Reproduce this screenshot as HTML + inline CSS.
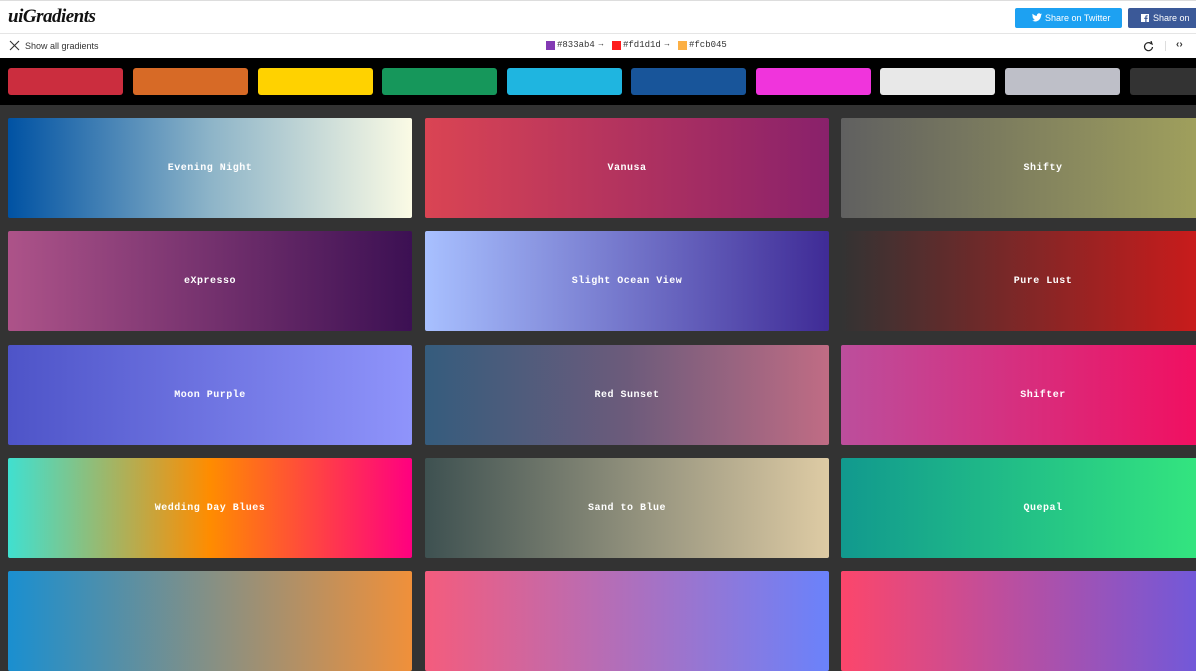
<!DOCTYPE html>
<html><head><meta charset="utf-8"><style>
*{margin:0;padding:0;box-sizing:border-box}
body{width:1196px;height:598px;overflow:hidden;background:#333;font-family:"Liberation Sans",sans-serif;position:relative}
.hdr{position:absolute;left:0;top:0;width:1196px;height:34px;background:#fff;border-top:1px solid #ddd;border-bottom:1px solid #e5e5e5}
.logo{position:absolute;left:8px;top:5px;font-family:"Liberation Serif",serif;font-style:italic;font-weight:bold;font-size:19px;color:#111;letter-spacing:-0.5px}
.btn{position:absolute;top:7px;height:20px;color:#fff;font-size:9px;line-height:20px;border-radius:2px;padding-left:30px}
.tb{position:absolute;left:0;top:34px;width:1196px;height:24px;background:#fff;font-size:9px;color:#333}
.band{position:absolute;left:0;top:58px;width:1196px;height:47px;background:#000}
.sw{position:absolute;top:10px;width:115px;height:27px;border-radius:3px}
.card{position:absolute;width:404px;height:100px;border-radius:2px;color:#fff;font-family:"Liberation Mono",monospace;font-size:10px;font-weight:bold;letter-spacing:0.5px;display:flex;align-items:center;justify-content:center}
.mono{font-family:"Liberation Mono",monospace}
</style></head><body>
<div class="hdr">
<div class="logo">uiGradients</div>
<div class="btn" style="left:1015px;width:107px;background:#1da1f2">
<svg style="position:absolute;left:17px;top:5px" width="10" height="9" viewBox="0 0 24 20"><path fill="#fff" d="M24 2.4a10 10 0 0 1-2.8.8A5 5 0 0 0 23.3.4a10 10 0 0 1-3.1 1.2A4.9 4.9 0 0 0 11.8 6 14 14 0 0 1 1.7.9a4.9 4.9 0 0 0 1.5 6.6A5 5 0 0 1 1 6.9a4.9 4.9 0 0 0 3.9 4.8 5 5 0 0 1-2.2.1 4.9 4.9 0 0 0 4.6 3.4A9.9 9.9 0 0 1 0 17.3 14 14 0 0 0 7.5 19.5c9 0 14-7.5 14-14v-.6A10 10 0 0 0 24 2.4z"/></svg>Share on Twitter</div>
<div class="btn" style="left:1128px;width:80px;background:#3b5998;padding-left:25px">
<svg style="position:absolute;left:13px;top:6px" width="8" height="8" viewBox="0 0 8 8"><rect width="8" height="8" fill="#fff"/><path d="M5.5 8V5h1l.2-1.2H5.5V3c0-.4.1-.6.6-.6h.6V1.3H5.8C4.8 1.3 4.3 1.9 4.3 2.8v1H3.3V5h1v3z" fill="#3b5998"/></svg>Share on Facebook</div>
</div>
<div class="tb">
<svg style="position:absolute;left:9px;top:6px" width="11" height="11" viewBox="0 0 11 11"><path d="M1 1L10 10M10 1L1 10" stroke="#333" stroke-width="1.1"/></svg>
<span style="position:absolute;left:25px;top:7px">Show all gradients</span>
<div style="position:absolute;left:546px;top:7px;width:9px;height:9px;background:#833ab4"></div>
<span class="mono" style="position:absolute;left:557px;top:6px">#833ab4</span><span style="position:absolute;left:597px;top:5px;font-size:8px">→</span>
<div style="position:absolute;left:612px;top:7px;width:9px;height:9px;background:#fd1d1d"></div>
<span class="mono" style="position:absolute;left:623px;top:6px">#fd1d1d</span><span style="position:absolute;left:663px;top:5px;font-size:8px">→</span>
<div style="position:absolute;left:678px;top:7px;width:9px;height:9px;background:#fcb045"></div>
<span class="mono" style="position:absolute;left:689px;top:6px">#fcb045</span>
<svg style="position:absolute;left:1143px;top:7px" width="11" height="11" viewBox="0 0 11 11"><path d="M8.5 3A4 4 0 1 0 9.5 6" fill="none" stroke="#222" stroke-width="1.2"/><path d="M6 1.5L9 3 8 0" fill="none" stroke="#222" stroke-width="1.2"/></svg>
<div style="position:absolute;left:1165px;top:7px;width:1px;height:10px;background:#ddd"></div>
<span style="position:absolute;left:1176px;top:5px;font-size:10px;font-weight:bold">‹›</span>
</div>
<div class="band">
<div class="sw" style="left:8px;background:#cb2d3e"></div>
<div class="sw" style="left:133px;background:#d76a26"></div>
<div class="sw" style="left:258px;background:#ffd200"></div>
<div class="sw" style="left:382px;background:#16975b"></div>
<div class="sw" style="left:507px;background:#1fb5e0"></div>
<div class="sw" style="left:631px;background:#18559a"></div>
<div class="sw" style="left:756px;background:#f034dc"></div>
<div class="sw" style="left:880px;background:#e8e8e8"></div>
<div class="sw" style="left:1005px;background:#bebfc8"></div>
<div class="sw" style="left:1130px;background:#333"></div>
</div>
<div class="card" style="left:8px;top:118px;background:linear-gradient(90deg,#0052a3,#8db4c8 50%,#fbfbe5)">Evening Night</div>
<div class="card" style="left:425px;top:118px;background:linear-gradient(90deg,#da4453,#89216b)">Vanusa</div>
<div class="card" style="left:841px;top:118px;background:linear-gradient(90deg,#606060,#a8a85c)">Shifty</div>
<div class="card" style="left:8px;top:231px;background:linear-gradient(90deg,#ad5389,#3c1053)">eXpresso</div>
<div class="card" style="left:425px;top:231px;background:linear-gradient(90deg,#a8c0ff,#3f2b96)">Slight Ocean View</div>
<div class="card" style="left:841px;top:231px;background:linear-gradient(90deg,#333333,#dd1818)">Pure Lust</div>
<div class="card" style="left:8px;top:345px;background:linear-gradient(90deg,#4e54c8,#8f94fb)">Moon Purple</div>
<div class="card" style="left:425px;top:345px;background:linear-gradient(90deg,#355c7d,#6c5b7b 50%,#c06c84)">Red Sunset</div>
<div class="card" style="left:841px;top:345px;background:linear-gradient(90deg,#bc4e9c,#f80759)">Shifter</div>
<div class="card" style="left:8px;top:458px;background:linear-gradient(90deg,#40e0d0,#ff8c00 50%,#ff0080)">Wedding Day Blues</div>
<div class="card" style="left:425px;top:458px;background:linear-gradient(90deg,#3e5151,#decba4)">Sand to Blue</div>
<div class="card" style="left:841px;top:458px;background:linear-gradient(90deg,#11998e,#38ef7d)">Quepal</div>
<div class="card" style="left:8px;top:571px;background:linear-gradient(90deg,#1a8fd0,#f0903a)"></div>
<div class="card" style="left:425px;top:571px;background:linear-gradient(90deg,#f45c7d,#6a82fb)"></div>
<div class="card" style="left:841px;top:571px;background:linear-gradient(90deg,#fc466b,#5f5be8)"></div>
</body></html>
